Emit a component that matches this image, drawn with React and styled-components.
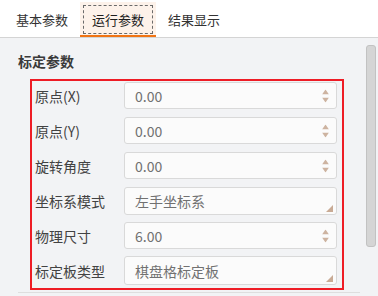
import React from "react";
import styled, { createGlobalStyle } from "styled-components";

const Global = createGlobalStyle`
  html, body { margin: 0; padding: 0; background: #ffffff; }
  body { width: 378px; height: 296px; overflow: hidden; font-family: "Noto Sans CJK SC", "Noto Sans", sans-serif; }
  * { box-sizing: border-box; }
`;

const Page = styled.div`
  width: 378px;
  height: 296px;
  display: flex;
  flex-direction: column;
  background: #fff;
`;

const TabBar = styled.div`
  height: 38px;
  display: flex;
  align-items: flex-end;
  padding-left: 4px;
  border-bottom: 1px solid #d4d4d4;
  flex: none;
`;

const Tab = styled.div`
  width: 76px;
  height: 35px;
  display: flex;
  align-items: center;
  justify-content: center;
  padding-top: 1px;
  font-size: 13px;
  color: ${p => (p.$active ? "#1e1e1e" : "#333")};
  background: ${p => (p.$active ? "#fdf2ea" : "transparent")};
  border-bottom: 2px solid ${p => (p.$active ? "#f07414" : "transparent")};
  outline: ${p => (p.$active ? "1px dashed #6a6a6a" : "none")};
  outline-offset: -4px;
`;

const Panel = styled.div`
  flex: 1;
  display: flex;
  background: #f2f3f5;
  min-height: 0;
`;

const Content = styled.div`
  width: 360px;
  padding-left: 18px;
  display: flex;
  flex-direction: column;
`;

const SectionTitle = styled.div`
  margin-top: 13px;
  height: 20px;
  line-height: 20px;
  font-size: 14px;
  font-weight: bold;
  color: #3a3a3a;
`;

const Highlight = styled.div`
  margin-top: 8px;
  margin-left: 12px;
  width: 314px;
  border: 2px solid #ee1c25;
  padding: 1px 5px 3px 3px;
  display: flex;
  flex-direction: column;
`;

const Field = styled.div`
  display: flex;
  align-items: center;
  margin-top: ${p => p.$gap}px;
`;

const Label = styled.div`
  width: 89px;
  font-size: 14px;
  color: #424242;
  white-space: nowrap;
`;

const Box = styled.div`
  position: relative;
  flex: 1;
  height: ${p => p.$h}px;
  background: #fbfbfb;
  border: 1px solid #d9d9d9;
  border-radius: 3px;
  display: flex;
  align-items: center;
  padding-left: 10px;
  font-size: 14px;
  color: #717171;
`;

const Spinner = styled.div`
  position: absolute;
  right: 7px;
  top: 50%;
  transform: translateY(-50%);
  display: flex;
  flex-direction: column;
  gap: 3px;
`;

const Corner = styled.div`
  position: absolute;
  right: 3px;
  bottom: 2px;
  width: 7px;
  height: 7px;
  background: #c9ab95;
  clip-path: polygon(100% 0, 100% 100%, 0 100%);
`;

const Divider = styled.div`
  margin-top: 2px;
  height: 1px;
  background: #dedede;
`;

const Track = styled.div`
  flex: 1;
  display: flex;
  justify-content: flex-start;
  padding-left: 6px;
  padding-top: 7px;
`;

const Thumb = styled.div`
  width: 10px;
  height: 202px;
  background: #d5d5d5;
  border: 1px solid #c2c2c2;
  border-radius: 3px;
`;

const Arrows = () => (
  <Spinner>
    <svg width="7" height="5" viewBox="0 0 7 5"><path d="M3.5 0L7 5H0z" fill="#cdb3a0" /></svg>
    <svg width="7" height="5" viewBox="0 0 7 5"><path d="M0 0H7L3.5 5z" fill="#cdb3a0" /></svg>
  </Spinner>
);

const fields = [
  { label: "原点(X)", value: "0.00", kind: "num", h: 27, gap: 0 },
  { label: "原点(Y)", value: "0.00", kind: "num", h: 27, gap: 8 },
  { label: "旋转角度", value: "0.00", kind: "num", h: 27, gap: 8 },
  { label: "坐标系模式", value: "左手坐标系", kind: "sel", h: 28, gap: 8 },
  { label: "物理尺寸", value: "6.00", kind: "num", h: 27, gap: 7 },
  { label: "标定板类型", value: "棋盘格标定板", kind: "sel", h: 29, gap: 7 },
];

export default function App() {
  return (
    <Page>
      <Global />
      <TabBar>
        <Tab>基本参数</Tab>
        <Tab $active>运行参数</Tab>
        <Tab>结果显示</Tab>
      </TabBar>
      <Panel>
        <Content>
          <SectionTitle>标定参数</SectionTitle>
          <Highlight>
            {fields.map(f => (
              <Field key={f.label} $gap={f.gap}>
                <Label>{f.label}</Label>
                <Box $h={f.h}>
                  {f.value}
                  {f.kind === "num" ? <Arrows /> : <Corner />}
                </Box>
              </Field>
            ))}
          </Highlight>
          <Divider />
        </Content>
        <Track>
          <Thumb />
        </Track>
      </Panel>
    </Page>
  );
}
